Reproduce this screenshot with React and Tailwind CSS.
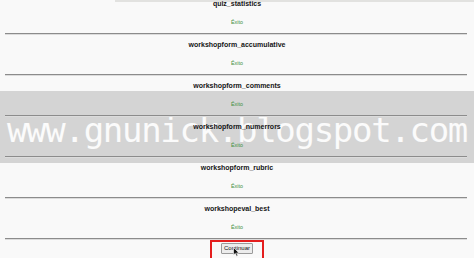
const rows = [
  "quiz_statistics",
  "workshopform_accumulative",
  "workshopform_comments",
  "workshopform_numerrors",
  "workshopform_rubric",
  "workshopeval_best",
];

function Row({ name }) {
  return (
    <div className="h-[41px] flex flex-col items-center">
      <div className="h-[8px] leading-[8px] text-[7px] font-bold text-[#151515] relative z-10">{name}</div>
      <div className="mt-[11px] h-[6px] leading-[6px] text-[5.4px] text-[#3f8f3f] relative z-10">Éxito</div>
      <div className="mt-[8px] ml-[5px] w-[462px] self-start border-t border-[#8c8c8c] border-b border-b-[#dcdcdc]" />
    </div>
  );
}

export default function App() {
  return (
    <div
      className="relative w-[474px] h-[258px] overflow-hidden bg-[#f9f9f9]"
      style={{ fontFamily: '"Liberation Sans", Arial, sans-serif' }}
    >
      <div className="absolute top-0 left-[115px] right-0 h-[2px] bg-[#e2e2e0]" />
      <div className="absolute top-[91px] left-0 right-0 h-[72px] bg-black/15 flex items-center justify-center">
        <span
          className="text-[34px] leading-none tracking-[-1.3px] text-white/90 pt-[5px]"
          style={{ fontFamily: '"DejaVu Sans Mono", "Liberation Mono", monospace' }}
        >
          www.gnunick.blogspot.com
        </span>
      </div>

      <div className="relative flex flex-col">
        {rows.map((r) => (
          <Row key={r} name={r} />
        ))}
      </div>

      <div className="absolute top-[240px] left-[210px] w-[54px] h-[22px] border-2 border-[#e41e1e] flex justify-center">
        <button className="mt-[1px] h-[11px] px-[2px] leading-[9px] text-[6px] text-[#111] bg-[#ececec] border border-[#9a9a9a] rounded-[1px]">
          Continuar
        </button>
        <svg className="absolute left-[21px] top-[5px]" width="7" height="10" viewBox="0 0 7 10">
          <path d="M0.5 0.5 L0.5 8 L2.3 6.3 L3.6 9.3 L4.8 8.8 L3.6 5.9 L6 5.9 Z" fill="#111" stroke="#fff" strokeWidth="0.6" />
        </svg>
      </div>
    </div>
  );
}
